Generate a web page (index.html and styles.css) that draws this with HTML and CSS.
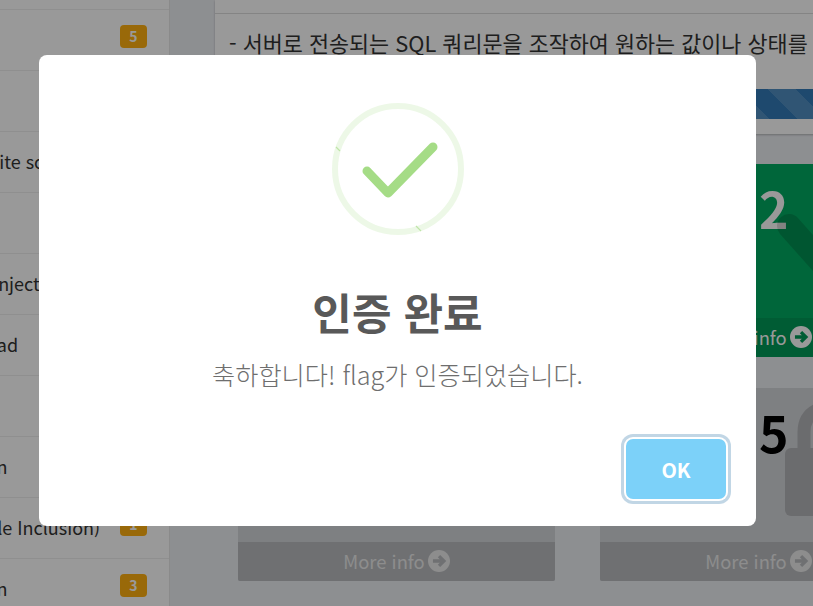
FILE: index.html
```html
<!DOCTYPE html>
<html lang="ko">

<head>
    <meta charset="UTF-8">
    <title>Wargame</title>
    <link rel="stylesheet" href="styles.css">
</head>

<body>
    <div class="page">
        <aside class="sidebar">
            <div class="side-row first"><span class="side-label">Web Basic</span><span class="badge">5</span></div>
            <div class="side-row"><span class="side-label">Basic</span></div>
            <div class="side-row"><span class="side-label">Host Website source</span></div>
            <div class="side-row"><span class="side-label">Request</span></div>
            <div class="side-row"><span class="side-label">Bind SQL Injection</span><span class="badge">4</span></div>
            <div class="side-row"><span class="side-label">Shell Upload</span></div>
            <div class="side-row"><span class="side-label">Session</span></div>
            <div class="side-row"><span class="side-label">OI Injection</span></div>
            <div class="side-row"><span class="side-label">(Upload File Inclusion)</span><span class="badge">1</span></div>
            <div class="side-row"><span class="side-label">OI Injection</span><span class="badge">3</span></div>
        </aside>

        <main class="content">
            <section class="panel">
                <div class="panel-head"></div>
                <p class="panel-text">- 서버로 전송되는 SQL 쿼리문을 조작하여 원하는 값이나 상태를</p>
                <div class="progress"></div>
            </section>

            <section class="cards">
                <div class="card green">
                    <div class="card-body"><span class="card-num">1</span></div>
                    <div class="card-foot">More info <svg class="arrow" viewBox="0 0 20 20"><circle cx="10" cy="10" r="10" fill="currentColor"/><path class="arrow-cut" d="M4.5 10H14M10 5.5l4.5 4.5-4.5 4.5"/></svg></div>
                </div>
                <div class="card green">
                    <div class="card-body"><span class="card-num">2</span></div>
                    <svg class="card-icon" viewBox="0 0 60 80"><path d="M12 12L60 66" class="check-mark"/></svg>
                    <div class="card-foot">More info <svg class="arrow" viewBox="0 0 20 20"><circle cx="10" cy="10" r="10" fill="currentColor"/><path class="arrow-cut" d="M4.5 10H14M10 5.5l4.5 4.5-4.5 4.5"/></svg></div>
                </div>
                <div class="card locked">
                    <div class="card-body"><span class="card-num">3</span></div>
                    <div class="card-foot">More info <svg class="arrow" viewBox="0 0 20 20"><circle cx="10" cy="10" r="10" fill="currentColor"/><path class="arrow-cut" d="M4.5 10H14M10 5.5l4.5 4.5-4.5 4.5"/></svg></div>
                </div>
                <div class="card locked">
                    <div class="card-body"><span class="card-num">5</span></div>
                    <svg class="lock-icon" viewBox="0 0 60 130"><path class="lock-arc" d="M19 62V44C19 25 34 17 60 17"/><rect x="0" y="60" width="90" height="68" rx="6"/></svg>
                    <div class="card-foot">More info <svg class="arrow" viewBox="0 0 20 20"><circle cx="10" cy="10" r="10" fill="currentColor"/><path class="arrow-cut" d="M4.5 10H14M10 5.5l4.5 4.5-4.5 4.5"/></svg></div>
                </div>
            </section>
        </main>
    </div>

    <div class="overlay">
        <div class="modal">
            <svg class="success-icon" viewBox="0 0 132 132">
                <circle class="ring" cx="66" cy="66" r="63"/>
                <path class="tick" d="M4 44l4 4M84 123l5 5"/>
                <path class="check" d="M35 68L56 90L101 44"/>
            </svg>
            <h2 class="modal-title">인증 완료</h2>
            <p class="modal-text">축하합니다! flag가 인증되었습니다.</p>
            <div class="modal-actions">
                <button class="ok">OK</button>
            </div>
        </div>
    </div>
</body>

</html>
```

FILE: styles.css
```css
* {
    margin: 0;
    padding: 0;
    box-sizing: border-box;
    font-family: "Noto Sans CJK KR", "Noto Sans", sans-serif;
}

body {
    width: 813px;
    height: 606px;
    overflow: hidden;
    background: #eceef2;
}

.page {
    display: flex;
    height: 606px;
    overflow: hidden;
}

/* sidebar is cut off on the left, page was scrolled */
.sidebar {
    flex: none;
    width: 285px;
    margin-left: -115px;
    background: #fff;
    border-right: 1px solid #e6e6e6;
    padding-top: 9px;
}

.side-row {
    display: flex;
    justify-content: space-between;
    height: 61px;
    padding: 15px 22px 0 25px;
    border-bottom: 1px solid #eee;
    color: #333;
    font-size: 18px;
    line-height: 29px;
    white-space: nowrap;
}

.side-row.first {
    height: 62px;
    border-top: 1px solid #eee;
}

.badge {
    width: 27px;
    height: 23px;
    border-radius: 4px;
    background: #ffb010;
    color: #fff;
    font-size: 14px;
    font-weight: 700;
    line-height: 23px;
    text-align: center;
}

.content {
    flex: none;
    width: 760px;
    padding-left: 45px;
}

.panel {
    width: 700px;
    height: 134px;
    padding: 0 14px;
    background: #fff;
    box-shadow: 0 1px 2px rgba(0, 0, 0, 0.25);
}

.panel-head {
    height: 14px;
    margin: 0 -14px 14px;
    border-bottom: 1px solid #ddd;
}

.panel-text {
    color: #333;
    font-size: 21.8px;
    line-height: 30px;
    white-space: nowrap;
}

.progress {
    height: 30px;
    margin-top: 31px;
    background-color: #337ab7;
    background-image: linear-gradient(45deg, rgba(255, 255, 255, 0.15) 25%, transparent 25%, transparent 50%, rgba(255, 255, 255, 0.15) 50%, rgba(255, 255, 255, 0.15) 75%, transparent 75%, transparent);
    background-size: 56px 56px;
    background-position: 35px 0;
}

.cards {
    display: grid;
    grid-template-columns: 317px 317px;
    grid-auto-rows: 193px;
    gap: 31px 45px;
    margin: 30px 0 0 23px;
}

.card {
    position: relative;
    display: flex;
    flex-direction: column;
    overflow: hidden;
    border-radius: 2px;
    color: #fff;
}

.card-body {
    flex: 1;
    padding: 7px 0 0 159px;
}

.card-num {
    font-size: 50px;
    font-weight: 700;
    line-height: 72px;
}

.card-foot {
    display: flex;
    align-items: center;
    justify-content: center;
    gap: 3px;
    height: 39px;
    padding-bottom: 2px;
    font-size: 18.4px;
}

.green {
    background: #00aa61;
}

.green .card-foot {
    background: #009957;
}

.locked {
    background: #d3d5d9;
}

.locked .card-num {
    color: #000;
}

.locked .card-foot {
    background: #b9bbbf;
    color: #ebebeb;
}

.arrow {
    width: 22px;
    height: 22px;
}

.arrow-cut {
    fill: none;
    stroke-width: 3;
    stroke: #009957;
}

.locked .arrow-cut {
    stroke: #b9bbbf;
}

.card-icon {
    position: absolute;
    left: 177px;
    top: 50px;
    width: 60px;
    height: 80px;
}

.check-mark {
    fill: none;
    stroke: rgba(0, 0, 0, 0.15);
    stroke-width: 24;
    stroke-linecap: round;
}

.lock-icon {
    position: absolute;
    left: 185px;
    top: 0;
    width: 60px;
    height: 130px;
    opacity: 0.15;
}

.lock-arc {
    fill: none;
    stroke: #000;
    stroke-width: 13;
}

/* dialog */
.overlay {
    position: fixed;
    top: 0;
    left: 0;
    width: 813px;
    height: 606px;
    display: flex;
    align-items: flex-start;
    padding: 55px 0 0 39px;
    background: rgba(0, 0, 0, 0.4);
}

.modal {
    display: flex;
    flex-direction: column;
    align-items: center;
    width: 717px;
    height: 471px;
    padding: 48px 30px 0;
    background: #fff;
    border-radius: 8px;
}

.success-icon {
    width: 132px;
    height: 132px;
}

.ring {
    fill: none;
    stroke: rgba(165, 220, 134, 0.2);
    stroke-width: 6;
}

.tick {
    fill: none;
    stroke: #bfe5a9;
    stroke-width: 1.2;
}

.check {
    fill: none;
    stroke: #a5dc86;
    stroke-width: 9;
    stroke-linecap: round;
    stroke-linejoin: round;
}

.modal-title {
    margin-top: 49px;
    color: #595959;
    font-size: 43px;
    font-weight: 700;
    line-height: 54px;
}

.modal-text {
    margin-top: 18px;
    color: #6e6e6e;
    font-size: 25.2px;
    font-weight: 300;
    line-height: 36px;
}

.modal-actions {
    display: flex;
    justify-content: flex-end;
    width: 100%;
    margin-top: 47px;
}

.ok {
    width: 100px;
    height: 60px;
    border: none;
    border-radius: 7px;
    background: #7cd1f9;
    box-shadow: 0 0 0 2px #fff, 0 0 0 5px rgba(43, 114, 165, 0.29);
    color: #fff;
    font-size: 20px;
    font-weight: 700;
}
```
